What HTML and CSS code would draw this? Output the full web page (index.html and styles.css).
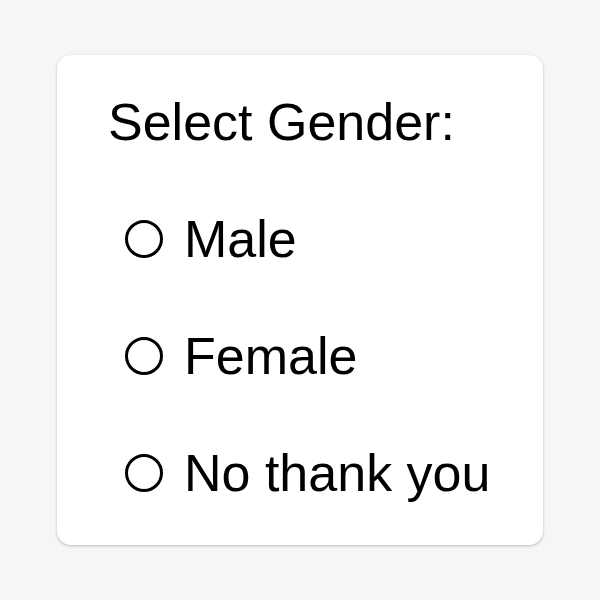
FILE: index.html
```html
<!DOCTYPE html>
<html>
<head>
<meta charset="utf-8">
<link rel="stylesheet" href="styles.css">
</head>
<body>
<div class="card">
  <div class="title">Select Gender:</div>
  <div class="options">
    <div class="option"><span class="radio"></span><span class="label">Male</span></div>
    <div class="option"><span class="radio"></span><span class="label">Female</span></div>
    <div class="option"><span class="radio"></span><span class="label">No thank you</span></div>
  </div>
</div>
</body>
</html>
```
FILE: styles.css
```css
html, body {
  margin: 0;
  padding: 0;
  background: #f6f6f6;
}
body {
  width: 600px;
  height: 600px;
  padding: 55px 57px;
  box-sizing: border-box;
  font-family: "Liberation Sans", Arial, sans-serif;
  color: #000;
}
.card {
  width: 486px;
  height: 490px;
  box-sizing: border-box;
  background: #fff;
  border-radius: 14px;
  box-shadow: 0 1px 3px rgba(0,0,0,0.25);
  padding: 41px 0 0 51px;
}
.title {
  font-size: 52px;
  line-height: 52px;
}
.options {
  display: flex;
  flex-direction: column;
  gap: 65px;
  margin-top: 65px;
  padding-left: 17px;
}
.option {
  display: flex;
  align-items: center;
  height: 52px;
  gap: 21px;
}
.radio {
  width: 38px;
  height: 38px;
  box-sizing: border-box;
  border: 3px solid #000;
  border-radius: 50%;
  flex: none;
}
.label {
  font-size: 52px;
  line-height: 52px;
}
```
